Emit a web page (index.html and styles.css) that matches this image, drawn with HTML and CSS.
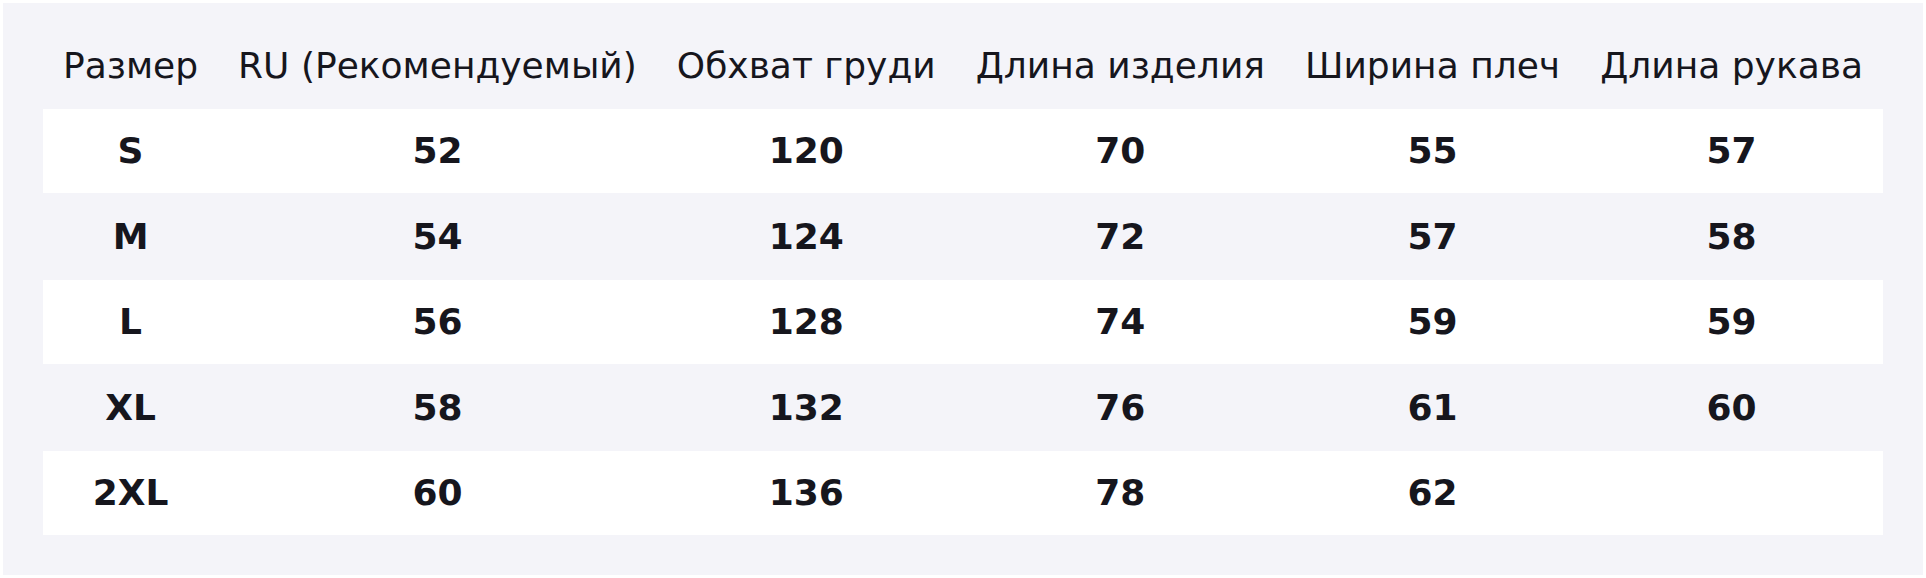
FILE: index.html
```html
<!DOCTYPE html>
<html lang="ru">
<head>
<meta charset="utf-8">
<title>Таблица размеров</title>
<link rel="stylesheet" href="styles.css">
</head>
<body>
<div class="panel">
  <table class="sizes">
    <thead>
      <tr>
        <th>Размер</th>
        <th>RU (Рекомендуемый)</th>
        <th>Обхват груди</th>
        <th>Длина изделия</th>
        <th>Ширина плеч</th>
        <th>Длина рукава</th>
      </tr>
    </thead>
    <tbody>
      <tr class="odd"><td>S</td><td>52</td><td>120</td><td>70</td><td>55</td><td>57</td></tr>
      <tr><td>M</td><td>54</td><td>124</td><td>72</td><td>57</td><td>58</td></tr>
      <tr class="odd"><td>L</td><td>56</td><td>128</td><td>74</td><td>59</td><td>59</td></tr>
      <tr><td>XL</td><td>58</td><td>132</td><td>76</td><td>61</td><td>60</td></tr>
      <tr class="odd"><td>2XL</td><td>60</td><td>136</td><td>78</td><td>62</td><td></td></tr>
    </tbody>
  </table>
</div>
</body>
</html>
```

FILE: styles.css
```css
html, body {
  margin: 0;
  background: #ffffff;
}
body {
  padding: 3px;
  font-family: "DejaVu Sans", sans-serif;
  color: #16161d;
}
.panel {
  background: #f4f4f9;
  padding: 40px;
  height: 492px;
  box-sizing: content-box;
}
.sizes {
  width: 100%;
  border-collapse: separate;
  border-spacing: 0 2px;
  font-size: 36px;
  line-height: normal;
}
.sizes th {
  font-weight: normal;
  text-align: center;
  padding: 0 20px 21px;
  white-space: nowrap;
}
.sizes td {
  font-weight: bold;
  text-align: center;
  padding: 21.25px 20px;
  white-space: nowrap;
}
.sizes tr.odd td {
  background: #ffffff;
}
```
